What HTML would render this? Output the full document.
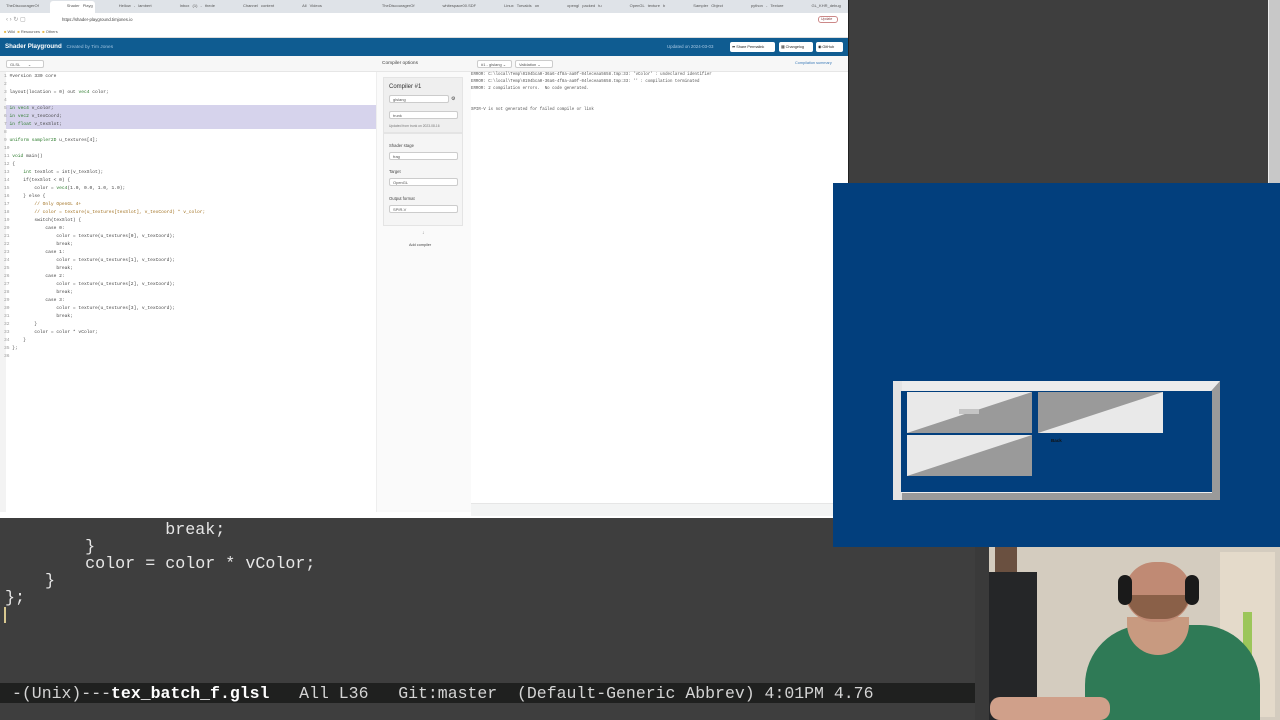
<!DOCTYPE html>
<html><head><meta charset="utf-8"><style>
*{margin:0;padding:0;box-sizing:border-box}
body{width:1280px;height:720px;overflow:hidden;background:#3e3e3e;position:relative;font-family:"Liberation Sans",sans-serif}
.a{position:absolute}
.code{font-family:"Liberation Mono",monospace;font-size:4.6px;line-height:8px;white-space:pre;color:#444}
.ln{color:#999}
.kw{color:#2a7a2a}
.cm{color:#a07020}
.em{font-family:"Liberation Mono",monospace;font-size:16.7px;line-height:17px;white-space:pre;color:#e6e6e6}
.sel{border:1px solid #ccc;background:#fff;border-radius:2px;font-size:4px;color:#555;padding:1px 3px;height:8px}
</style></head><body>
<div class="a" style="left:0;top:0;width:849px;height:518px;background:#fff;border-right:1px solid #222;overflow:hidden">
<div class="a" style="left:0;top:0;width:848px;height:13px;background:#dfe3e8"></div>
<div class="a" style="left:50px;top:1px;width:45px;height:12px;background:#fff;border-radius:3px 3px 0 0"></div>
<div class="a" style="left:6px;top:3px;font-size:4px;color:#555;white-space:nowrap;word-spacing:2px">
<span style="margin-right:28px">TheDiscouragerOf</span><span style="margin-right:26px">Shader Playg</span><span style="margin-right:28px">Hellow - lambert</span><span style="margin-right:28px">Inbox (1) - thede</span><span style="margin-right:28px">Channel content</span><span style="margin-right:60px">All Videos</span><span style="margin-right:28px">TheDiscouragerOf</span><span style="margin-right:28px">whitespace00.SDF</span><span style="margin-right:28px">Linux Torvalds on</span><span style="margin-right:28px">opengl packed tu</span><span style="margin-right:28px">OpenGL texture b</span><span style="margin-right:28px">Sampler Object</span><span style="margin-right:28px">python - Texture</span><span style="margin-right:26px">GL_KHR_debug</span><span style="margin-right:26px">GL_ARB_debug</span><span>Reference Compil</span></div>
<div class="a" style="left:0;top:13px;width:848px;height:13px;background:#fff"></div>
<div class="a" style="left:62px;top:17px;font-size:4.3px;color:#444">https://shader-playground.timjones.io</div>
<div class="a" style="left:6px;top:16px;font-size:6px;color:#999">‹ › ↻ ▢</div>
<div class="a" style="left:818px;top:16px;width:20px;height:7px;border:1px solid #c88;border-radius:3px;font-size:3.5px;color:#844;padding-left:2px">Update</div>
<div class="a" style="left:0;top:26px;width:848px;height:12px;background:#fff;border-bottom:1px solid #ddd"></div>
<div class="a" style="left:4px;top:29px;font-size:4px;color:#555"><span style="color:#e8b84a">■</span> Wiki &nbsp;<span style="color:#e8b84a">■</span> Resources &nbsp;<span style="color:#e8b84a">■</span> Others</div>
<div class="a" style="left:0;top:38px;width:848px;height:18px;background:#0f5c91"></div>
<div class="a" style="left:5px;top:43px;font-size:6.2px;font-weight:bold;color:#fff">Shader Playground <span style="font-weight:normal;color:#9cc0de;font-size:4.8px;margin-left:3px">Created by Tim Jones</span></div>
<div class="a" style="left:667px;top:44px;font-size:4.4px;color:#a8c8e4">Updated on 2024-03-03</div>
<div class="a" style="left:730px;top:42px;width:45px;height:10px;background:#fff;border-radius:2px;font-size:3.8px;color:#222;padding:2px 2px">➦ Share Permalink</div>
<div class="a" style="left:779px;top:42px;width:34px;height:10px;background:#fff;border-radius:2px;font-size:3.8px;color:#222;padding:2px 2px">▦ Changelog</div>
<div class="a" style="left:816px;top:42px;width:27px;height:10px;background:#fff;border-radius:2px;font-size:3.8px;color:#222;padding:2px 2px">◉ GitHub</div>
<div class="a" style="left:0;top:56px;width:848px;height:16px;background:#f7f7f7;border-bottom:1px solid #e6e6e6"></div>
<div class="a sel" style="left:6px;top:60px;width:38px">GLSL &nbsp; &nbsp; &nbsp; ⌄</div>
<div class="a" style="left:382px;top:61px;font-size:4.8px;color:#444">Compiler options</div>
<div class="a sel" style="left:477px;top:60px;width:35px">#1 - glslang ⌄</div>
<div class="a sel" style="left:515px;top:60px;width:38px">Validation ⌄</div>
<div class="a" style="left:795px;top:61px;font-size:3.8px;color:#3a7ab8">Compilation summary</div>
<div class="a" style="left:0;top:72px;width:6px;height:440px;background:#f3f3f3"></div>
<div class="a" style="left:6px;top:105px;width:370px;height:24px;background:#d6d3ec"></div>
<div class="a code" style="left:4px;top:73px"><span class="ln">1</span> #version 330 core
<span class="ln">2</span>
<span class="ln">3</span> layout(location = 0) out <span class="kw">vec4</span> color;
<span class="ln">4</span>
<span class="ln">5</span> <span class="kw">in</span> <span class="kw">vec4</span> v_color;
<span class="ln">6</span> <span class="kw">in</span> <span class="kw">vec2</span> v_texCoord;
<span class="ln">7</span> <span class="kw">in</span> <span class="kw">float</span> v_texSlot;
<span class="ln">8</span>
<span class="ln">9</span> <span class="kw">uniform</span> <span class="kw">sampler2D</span> u_textures[4];
<span class="ln">10</span>
<span class="ln">11</span> <span class="kw">void</span> main()
<span class="ln">12</span> {
<span class="ln">13</span>     <span class="kw">int</span> texSlot = int(v_texSlot);
<span class="ln">14</span>     if(texSlot &lt; 0) {
<span class="ln">15</span>         color = <span class="kw">vec4</span>(1.0, 0.0, 1.0, 1.0);
<span class="ln">16</span>     } else {
<span class="ln">17</span>         <span class="cm">// Only OpenGL 4+</span>
<span class="ln">18</span>         <span class="cm">// color = texture(u_textures[texSlot], v_texCoord) * v_color;</span>
<span class="ln">19</span>         switch(texSlot) {
<span class="ln">20</span>             case 0:
<span class="ln">21</span>                 color = texture(u_textures[0], v_texCoord);
<span class="ln">22</span>                 break;
<span class="ln">23</span>             case 1:
<span class="ln">24</span>                 color = texture(u_textures[1], v_texCoord);
<span class="ln">25</span>                 break;
<span class="ln">26</span>             case 2:
<span class="ln">27</span>                 color = texture(u_textures[2], v_texCoord);
<span class="ln">28</span>                 break;
<span class="ln">29</span>             case 3:
<span class="ln">30</span>                 color = texture(u_textures[3], v_texCoord);
<span class="ln">31</span>                 break;
<span class="ln">32</span>         }
<span class="ln">33</span>         color = color * vColor;
<span class="ln">34</span>     }
<span class="ln">35</span> };
<span class="ln">36</span></div>
<div class="a" style="left:376px;top:72px;width:95px;height:440px;background:#fafafa;border-left:1px solid #eee"></div>
<div class="a" style="left:383px;top:77px;width:80px;height:56px;background:#efefef;border:1px solid #e4e4e4"></div>
<div class="a" style="left:383px;top:133px;width:80px;height:93px;background:#f5f5f5;border:1px solid #e4e4e4"></div>
<div class="a" style="left:389px;top:84px;font-size:6px;color:#333">Compiler #1</div>
<div class="a sel" style="left:389px;top:95px;width:60px">glslang</div>
<div class="a" style="left:451px;top:96px;font-size:5px;color:#444">⚙</div>
<div class="a sel" style="left:389px;top:111px;width:69px">trunk</div>
<div class="a" style="left:389px;top:124px;font-size:3.3px;color:#777">Updated from trunk on 2023-08-16</div>
<div class="a" style="left:389px;top:143px;font-size:4.2px;color:#444">Shader stage</div>
<div class="a sel" style="left:389px;top:152px;width:69px">frag</div>
<div class="a" style="left:389px;top:169px;font-size:4.2px;color:#444">Target</div>
<div class="a sel" style="left:389px;top:178px;width:69px">OpenGL</div>
<div class="a" style="left:389px;top:196px;font-size:4.2px;color:#444">Output format</div>
<div class="a sel" style="left:389px;top:205px;width:69px">SPIR-V</div>
<div class="a" style="left:422px;top:230px;font-size:5px;color:#888">↓</div>
<div class="a" style="left:409px;top:243px;font-size:3.8px;color:#444">Add compiler</div>
<div class="a code" style="left:471px;top:72px;font-size:4.1px;line-height:7px;color:#555">ERROR: C:\local\Temp\0194bca0-36a6-4f8a-aa0f-04leceaa5658.tmp:33: 'vColor' : undeclared identifier
ERROR: C:\local\Temp\0194bca0-36a6-4f8a-aa0f-04leceaa5658.tmp:33: '' : compilation terminated
ERROR: 2 compilation errors.  No code generated.


SPIR-V is not generated for failed compile or link</div>
<div class="a" style="left:471px;top:503px;width:362px;height:13px;background:#f3f4f4;border-top:1px solid #e6e6e6"></div>
</div>
<div class="a" style="left:1268px;top:0;width:12px;height:183px;background:#c8c8c8;border-left:1px solid #eee"></div>
<div class="a" style="left:833px;top:183px;width:447px;height:364px;background:#023f7d"></div>
<div class="a" style="left:893px;top:381px;width:327px;height:119px;background:#9a9a9a"></div>
<div class="a" style="left:893px;top:381px;width:327px;height:11px;background:#ececec;clip-path:polygon(0 0,100% 0,97% 100%,0 100%)"></div>
<div class="a" style="left:893px;top:381px;width:9px;height:119px;background:#e4e4e4"></div>
<div class="a" style="left:901px;top:391px;width:311px;height:102px;background:#023f7d;border-bottom:1px solid #eee"></div>
<svg class="a" style="left:907px;top:392px" width="125" height="41"><rect width="125" height="41" fill="#e9e9e9"/><polygon points="0,41 125,0 125,41" fill="#9a9a9a"/><rect x="52" y="17" width="20" height="5" fill="#c4c4c4"/></svg>
<svg class="a" style="left:1038px;top:392px" width="125" height="41"><rect width="125" height="41" fill="#9a9a9a"/><polygon points="0,41 125,0 125,41" fill="#e9e9e9"/></svg>
<svg class="a" style="left:907px;top:435px" width="125" height="41"><rect width="125" height="41" fill="#e9e9e9"/><polygon points="0,41 125,0 125,41" fill="#9a9a9a"/></svg>
<div class="a" style="left:1051px;top:438px;font-size:4.5px;color:#111;font-weight:bold">Back</div>
<div class="a em" style="left:5px;top:522px">                break;
        }
        color = color * vColor;
    }
};</div>
<div class="a" style="left:4px;top:607px;width:2px;height:16px;background:#d8c890"></div>
<div class="a" style="left:0;top:683px;width:975px;height:20px;background:#1f201f"></div>
<div class="a em" style="left:12px;top:685px;color:#d4d4d4;font-size:16.5px">-(Unix)---<b style="color:#fff">tex_batch_f.glsl</b>   All L36   Git:master  (Default-Generic Abbrev) 4:01PM 4.76</div>
<div class="a" style="left:975px;top:547px;width:305px;height:173px;background:#d4ccbf;overflow:hidden">
 <div class="a" style="left:0;top:0;width:14px;height:173px;background:#3a3a3a"></div>
 <div class="a" style="left:14px;top:25px;width:48px;height:148px;background:#252628"></div>
 <div class="a" style="left:20px;top:0;width:22px;height:25px;background:#6a5040"></div>
 <div class="a" style="left:245px;top:5px;width:55px;height:165px;background:#e6dccb;opacity:.9"></div>
 <div class="a" style="left:268px;top:65px;width:9px;height:75px;background:#9cc65a"></div>
 <div class="a" style="left:110px;top:78px;width:175px;height:100px;background:#2f7a56;border-radius:60px 60px 0 0"></div>
 <div class="a" style="left:152px;top:70px;width:62px;height:38px;background:#c89a80;border-radius:0 0 35px 35px"></div>
 <div class="a" style="left:150px;top:15px;width:66px;height:60px;background:#c08a74;border-radius:33px"></div>
 <div class="a" style="left:152px;top:48px;width:62px;height:24px;background:#8a6048;border-radius:0 0 30px 30px"></div>
 <div class="a" style="left:143px;top:28px;width:14px;height:30px;background:#1a1a1a;border-radius:7px"></div>
 <div class="a" style="left:210px;top:28px;width:14px;height:30px;background:#1a1a1a;border-radius:7px"></div>
 <div class="a" style="left:15px;top:150px;width:120px;height:23px;background:#d0a08a;border-radius:10px"></div>
</div>
</body></html>
